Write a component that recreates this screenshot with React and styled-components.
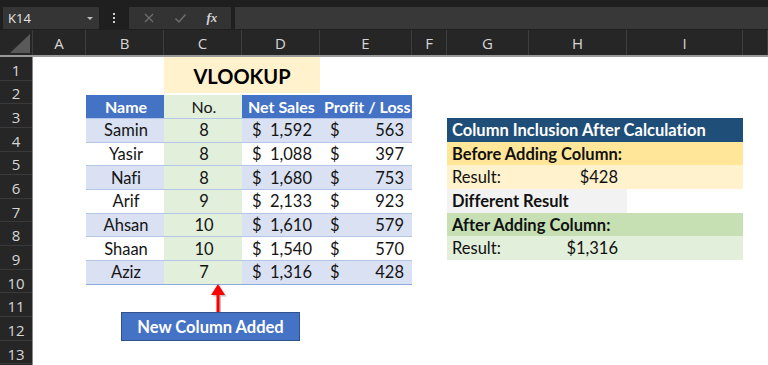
import React from 'react';
import styled, { createGlobalStyle } from 'styled-components';

const GlobalStyle = createGlobalStyle`
  html, body { margin: 0; padding: 0; background: #ffffff; }
  body { width: 768px; height: 365px; overflow: hidden; }
`;

const COLS = [
  { id: 'A', w: 53 },
  { id: 'B', w: 78 },
  { id: 'C', w: 78 },
  { id: 'D', w: 78 },
  { id: 'E', w: 92 },
  { id: 'F', w: 35 },
  { id: 'G', w: 82 },
  { id: 'H', w: 98 },
  { id: 'I', w: 116 },
];

const ROWS = Array.from({ length: 13 }, (_, i) => i + 1);

const DATA = [
  ['Samin', '8', '1,592', '563'],
  ['Yasir', '8', '1,088', '397'],
  ['Nafi', '8', '1,680', '753'],
  ['Arif', '9', '2,133', '923'],
  ['Ahsan', '10', '1,610', '579'],
  ['Shaan', '10', '1,540', '570'],
  ['Aziz', '7', '1,316', '428'],
];

const Window = styled.div`
  width: 768px;
  height: 365px;
  display: flex;
  flex-direction: column;
  font-family: Lato, "Liberation Sans", sans-serif;
  font-variant-ligatures: none;
  background: #ffffff;
`;

/* ---------- formula bar ---------- */
const TopBar = styled.div`
  height: 30px;
  box-sizing: border-box;
  padding: 7px 0 1px 3px;
  background: #1f1f1f;
  display: flex;
  align-items: stretch;
  gap: 4px;
`;

const NameBox = styled.div`
  width: 96px;
  box-sizing: border-box;
  background: #353535;
  color: #e6e6e6;
  font-family: "Open Sans", "Noto Sans", sans-serif;
  font-size: 13px;
  display: flex;
  align-items: center;
  justify-content: space-between;
  padding: 0 6px 0 5px;
`;

const Caret = styled.span`
  width: 0;
  height: 0;
  border-left: 3px solid transparent;
  border-right: 3px solid transparent;
  border-top: 3px solid #bdbdbd;
`;

const Dots = styled.div`
  width: 22px;
  display: flex;
  flex-direction: column;
  align-items: center;
  justify-content: center;
  gap: 2px;
  span {
    width: 2px;
    height: 2px;
    background: #cfcfcf;
  }
`;

const FxBox = styled.div`
  width: 102px;
  background: #333333;
  display: flex;
  align-items: center;
  justify-content: space-around;
  padding: 0 4px;
  box-sizing: border-box;
`;

const FxLabel = styled.span`
  font-family: "Liberation Serif", serif;
  font-style: italic;
  font-weight: bold;
  font-size: 13px;
  color: #d4d4d4;
`;

const FormulaInput = styled.div`
  flex: 1;
  background: #383838;
`;

/* ---------- column headers ---------- */
const HeaderRow = styled.div`
  height: 27px;
  display: flex;
  background: #262626;
  border-bottom: 2px solid #9a9a9a;
  box-sizing: border-box;
`;

const Corner = styled.div`
  width: 33px;
  border-right: 1px solid #3c3c3c;
  box-sizing: border-box;
  display: flex;
  align-items: flex-end;
  justify-content: flex-end;
  padding: 0 2px 2px 0;
`;

const ColHead = styled.div`
  width: ${(p) => p.$w}px;
  flex: ${(p) => (p.$grow ? 1 : 'none')};
  box-sizing: border-box;
  border-right: 1px solid #3e3e3e;
  color: #d6d6d6;
  font-family: "Open Sans", "Noto Sans", sans-serif;
  font-size: 15px;
  display: flex;
  align-items: center;
  justify-content: center;
  padding-top: 1px;
`;

/* ---------- sheet body ---------- */
const Body = styled.div`
  flex: 1;
  display: flex;
  min-height: 0;
`;

const RowHeads = styled.div`
  width: 33px;
  background: #262626;
  border-right: 1px solid #8a8a8a;
  box-sizing: border-box;
  display: flex;
  flex-direction: column;
`;

const RowHead = styled.div`
  height: 23.65px;
  flex: none;
  box-sizing: border-box;
  border-bottom: 1px solid #3a3a3a;
  color: #d6d6d6;
  font-family: "Open Sans", "Noto Sans", sans-serif;
  font-size: 15px;
  display: flex;
  align-items: center;
  justify-content: center;
  padding-top: 3px;
`;

const Canvas = styled.div`
  flex: 1;
  display: grid;
  grid-template-columns: ${COLS.map((c) => c.w + 'px').join(' ')} 1fr;
  grid-template-rows: 36px 2px 23px 166px 28px 29px;
  align-items: start;
`;

const Title = styled.div`
  grid-column: 3 / 5;
  grid-row: 1;
  height: 36px;
  background: #fff2cc;
  color: #000;
  font-weight: 700;
  font-size: 20px;
  display: flex;
  align-items: center;
  justify-content: center;
  padding-top: 1px;
  box-sizing: border-box;
`;

const DataTable = styled.div`
  grid-column: 2 / 6;
  grid-row: 3 / 5;
  display: grid;
  grid-template-columns: 78px 78px 78px 92px;
  border-bottom: 1px solid #8ea9db;
`;

const Cell = styled.div`
  height: ${(p) => (p.$head ? 23 : 23.7)}px;
  box-sizing: border-box;
  background: ${(p) => p.$bg};
  color: ${(p) => (p.$light ? '#ffffff' : '#141414')};
  font-weight: ${(p) => (p.$bold ? 700 : 400)};
  font-size: ${(p) => (p.$head ? 16 : 16.5)}px;
  display: flex;
  align-items: center;
  justify-content: ${(p) => p.$justify || 'center'};
  padding: 0 8px 0 10px;
  border-top: ${(p) => (p.$head ? 'none' : '1px solid #b4c6e7')};
  white-space: nowrap;
`;

const Panel = styled.div`
  grid-column: 7 / 10;
  grid-row: 4;
  display: flex;
  flex-direction: column;
`;

const PanelRow = styled.div`
  position: relative;
  height: 23.7px;
  width: ${(p) => p.$w || 296}px;
  box-sizing: border-box;
  background: ${(p) => p.$bg};
  color: ${(p) => (p.$light ? '#ffffff' : '#111')};
  font-weight: ${(p) => (p.$bold ? 700 : 400)};
  font-size: 16.5px;
  display: flex;
  align-items: center;
  padding-left: 5px;
  white-space: nowrap;
`;

const ResultValue = styled.span`
  position: absolute;
  left: 0;
  width: 180px;
  padding-right: 9px;
  box-sizing: border-box;
  text-align: right;
`;

const ArrowWrap = styled.div`
  grid-column: 3;
  grid-row: 5;
  height: 28px;
  padding-left: 47px;
`;

const Callout = styled.div`
  grid-column: 2 / 5;
  grid-row: 6;
  margin-left: 35px;
  width: 179px;
  height: 29px;
  box-sizing: border-box;
  background: #4472c4;
  border: 1.5px solid #2f528f;
  color: #ffffff;
  font-weight: 700;
  font-size: 16.5px;
  display: flex;
  align-items: center;
  justify-content: center;
`;

const Accounting = ({ value, bg }) => (
  <Cell $bg={bg} $justify="space-between">
    <span>$</span>
    <span>{value}</span>
  </Cell>
);

export default function App() {
  const blue = '#4472c4';
  const band = '#d9e1f2';
  const green = '#e2efda';
  return (
    <Window>
      <GlobalStyle />
      <TopBar>
        <NameBox>
          <span>K14</span>
          <Caret />
        </NameBox>
        <Dots>
          <span />
          <span />
          <span />
        </Dots>
        <FxBox>
          <svg width="12" height="12" viewBox="0 0 12 12">
            <path d="M2 2 L10 10 M10 2 L2 10" stroke="#6e6e6e" strokeWidth="1.3" />
          </svg>
          <svg width="13" height="12" viewBox="0 0 13 12">
            <path d="M1.5 6.5 L5 10 L11.5 2.5" stroke="#6e6e6e" strokeWidth="1.5" fill="none" />
          </svg>
          <FxLabel>fx</FxLabel>
        </FxBox>
        <FormulaInput />
      </TopBar>

      <HeaderRow>
        <Corner>
          <svg width="20" height="19" viewBox="0 0 20 19">
            <polygon points="20,0 20,19 0,19" fill="#5a5a5a" />
          </svg>
        </Corner>
        {COLS.map((c) => (
          <ColHead key={c.id} $w={c.w}>
            {c.id}
          </ColHead>
        ))}
        <ColHead $w={0} $grow />
      </HeaderRow>

      <Body>
        <RowHeads>
          {ROWS.map((r) => (
            <RowHead key={r}>{r}</RowHead>
          ))}
        </RowHeads>

        <Canvas>
          <Title>VLOOKUP</Title>

          <DataTable>
            <Cell $head $bg={blue} $light $bold>Name</Cell>
            <Cell $head $bg={green}>No.</Cell>
            <Cell $head $bg={blue} $light $bold $justify="flex-start" style={{ paddingLeft: 6 }}>Net Sales</Cell>
            <Cell $head $bg={blue} $light $bold $justify="flex-start" style={{ paddingLeft: 4 }}>Profit / Loss</Cell>
            {DATA.map(([name, no, sales, profit], i) => {
              const bg = i % 2 === 0 ? band : '#ffffff';
              return (
                <React.Fragment key={name}>
                  <Cell $bg={bg}>{name}</Cell>
                  <Cell $bg={green}>{no}</Cell>
                  <Accounting value={sales} bg={bg} />
                  <Accounting value={profit} bg={bg} />
                </React.Fragment>
              );
            })}
          </DataTable>

          <Panel>
            <PanelRow $bg="#1f4e78" $light $bold>Column Inclusion After Calculation</PanelRow>
            <PanelRow $bg="#ffe699" $bold>Before Adding Column:</PanelRow>
            <PanelRow $bg="#fff2cc">
              Result:
              <ResultValue>$428</ResultValue>
            </PanelRow>
            <PanelRow $bg="#f2f2f2" $bold $w={180}>Different Result</PanelRow>
            <PanelRow $bg="#c6e0b4" $bold>After Adding Column:</PanelRow>
            <PanelRow $bg="#e2efda">
              Result:
              <ResultValue>$1,316</ResultValue>
            </PanelRow>
          </Panel>

          <ArrowWrap>
            <svg width="20" height="28" viewBox="0 0 20 28">
              <g fill="#9b9b9b" opacity="0.6" transform="translate(1.5,1.5)">
                <polygon points="7,0 14,11 0,11" />
                <rect x="5.5" y="10" width="3" height="18" />
              </g>
              <polygon points="7,0 14,11 0,11" fill="#ff0000" />
              <rect x="5.5" y="10" width="3" height="18" fill="#ff0000" />
            </svg>
          </ArrowWrap>

          <Callout>New Column Added</Callout>
        </Canvas>
      </Body>
    </Window>
  );
}
